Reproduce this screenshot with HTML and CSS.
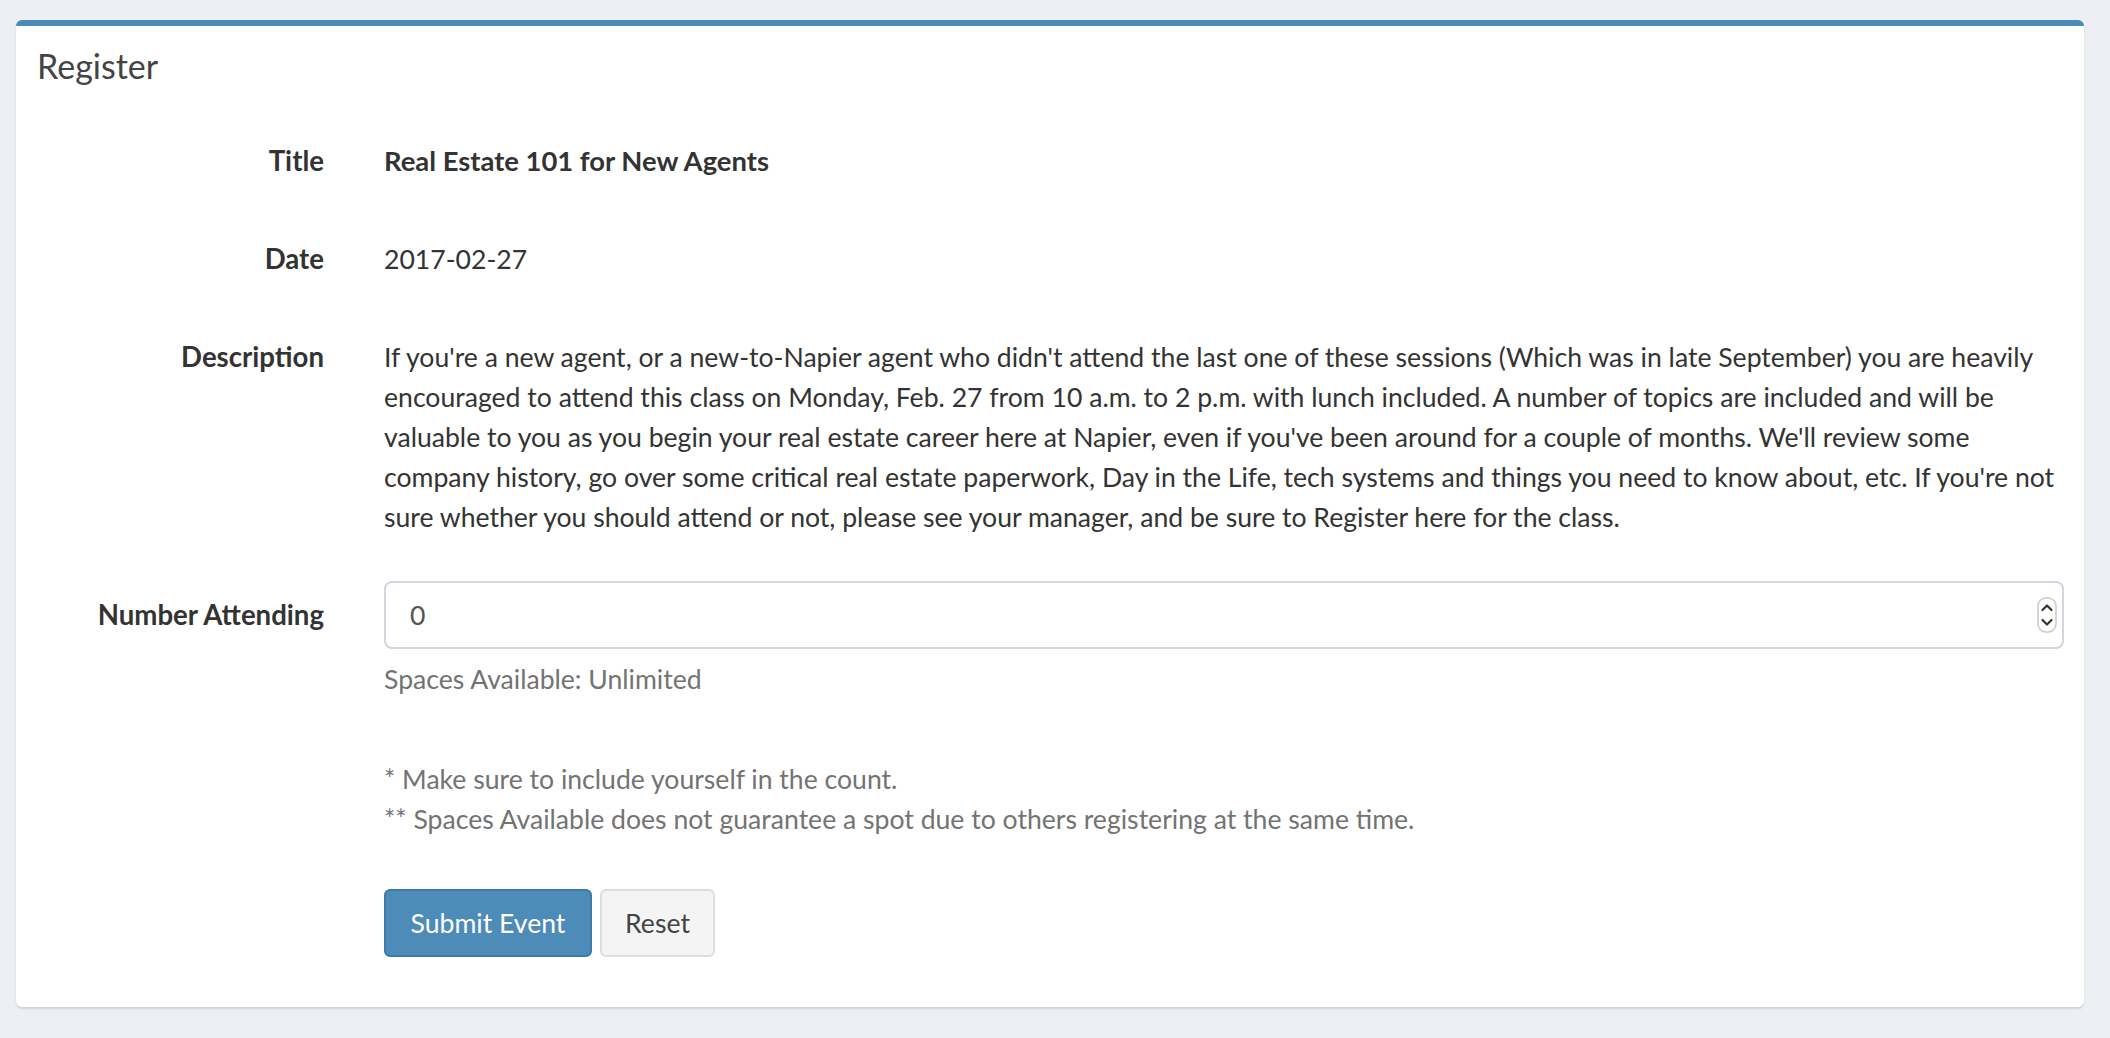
FILE: index.html
```html
<!DOCTYPE html>
<html lang="en">
<head>
<meta charset="utf-8">
<title>Register</title>
<link rel="stylesheet" href="styles.css">
</head>
<body>
<div class="content">
  <div class="box">
    <div class="box-header">
      <h3 class="box-title">Register</h3>
    </div>
    <form class="box-body">
      <div class="form-group">
        <label class="control-label">Title</label>
        <div class="field"><p class="static strong">Real Estate 101 for New Agents</p></div>
      </div>
      <div class="form-group">
        <label class="control-label">Date</label>
        <div class="field"><p class="static">2017-02-27</p></div>
      </div>
      <div class="form-group">
        <label class="control-label">Description</label>
        <div class="field"><p class="static desc">If you're a new agent, or a new-to-Napier agent who didn't attend the last one of these sessions (Which was in late September) you are heavily<br>encouraged to attend this class on Monday, Feb. 27 from 10 a.m. to 2 p.m. with lunch included. A number of topics are included and will be<br>valuable to you as you begin your real estate career here at Napier, even if you've been around for a couple of months. We'll review some<br>company history, go over some critical real estate paperwork, Day in the Life, tech systems and things you need to know about, etc. If you're not<br>sure whether you should attend or not, please see your manager, and be sure to Register here for the class.</p></div>
      </div>
      <div class="form-group">
        <label class="control-label">Number Attending</label>
        <div class="field">
          <div class="input-wrap">
            <input class="form-control" type="text" value="0">
            <span class="spinner" aria-hidden="true">
              <svg width="20" height="36" viewBox="0 0 20 36">
                <rect x="1" y="1" width="18" height="34" rx="8" ry="8" fill="#fff" stroke="#c9c9c9" stroke-width="1.5"/>
                <path d="M5.5 13 L10 8.5 L14.5 13" fill="none" stroke="#333" stroke-width="2.2" stroke-linecap="round" stroke-linejoin="round"/>
                <path d="M5.5 23 L10 27.5 L14.5 23" fill="none" stroke="#333" stroke-width="2.2" stroke-linecap="round" stroke-linejoin="round"/>
              </svg>
            </span>
          </div>
          <p class="help-block">Spaces Available: Unlimited</p>
        </div>
      </div>
      <div class="form-group">
        <div class="spacer"></div>
        <div class="field">
          <p class="help-block">* Make sure to include yourself in the count.<br>** Spaces Available does not guarantee a spot due to others registering at the same time.</p>
        </div>
      </div>
      <div class="form-group">
        <div class="spacer"></div>
        <div class="field buttons">
          <button type="button" class="btn btn-primary">Submit Event</button>
          <button type="button" class="btn btn-default">Reset</button>
        </div>
      </div>
    </form>
  </div>
</div>
</body>
</html>
```
FILE: styles.css
```css
* { box-sizing: border-box; }

html, body {
  margin: 0;
  padding: 0;
  background: #ecf0f5;
}

body {
  font-family: Lato, "Source Sans Pro", "Noto Sans", sans-serif;
  font-size: 26.6px;
  line-height: 40px;
  color: #333;
}

.content {
  padding: 20px 26px 32px 16px;
}

.box {
  background: #fff;
  border-top: 6px solid #4a8bba;
  border-radius: 6px;
  box-shadow: 0 2px 2px rgba(0, 0, 0, 0.12);
}

.box-header {
  padding: 20px 20px 21px 21px;
}

.box-title {
  margin: 0;
  font-size: 34px;
  line-height: 40px;
  font-weight: 400;
  color: #444;
}

.box-body {
  display: block;
  padding: 20px;
}

.form-group {
  display: grid;
  grid-template-columns: 16.6667% 1fr;
  margin: 0 -30px 30px;
}

.control-label {
  padding: 14px 30px 0;
  text-align: right;
  font-weight: 700;
  font-size: 27.6px;
}

.field {
  padding: 0 30px;
  min-width: 0;
}

.static {
  margin: 0;
  padding: 14px 0;
  min-height: 68px;
}

.strong {
  font-weight: 700;
  font-size: 27.4px;
}

.desc { white-space: nowrap; }

.input-wrap {
  position: relative;
}

.form-control {
  display: block;
  width: 100%;
  height: 68px;
  padding: 12px 24px;
  font-family: inherit;
  font-size: 26.6px;
  line-height: 40px;
  color: #555;
  background: #fff;
  border: 2px solid #d2d6de;
  border-radius: 8px;
  outline: none;
}

.spinner {
  position: absolute;
  right: 7px;
  top: 16px;
  width: 20px;
  height: 36px;
  display: block;
  line-height: 0;
}

.help-block {
  margin: 10px 0 20px;
  color: #737373;
}

.buttons {
  display: flex;
  gap: 8px;
}

.btn {
  height: 68px;
  padding: 12px 20px;
  font-family: inherit;
  font-size: 26.6px;
  line-height: 40px;
  border-radius: 6px;
  border: 2px solid transparent;
  cursor: pointer;
  white-space: nowrap;
}

.btn-primary {
  background: #4d8bb9;
  border-color: #3f79a6;
  color: #fff;
  width: 208px;
}

.btn-default {
  background: #f4f4f4;
  border-color: #dddddd;
  color: #444;
  width: 115px;
}
```
